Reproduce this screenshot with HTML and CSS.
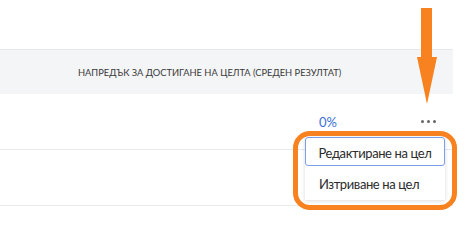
FILE: index.html
```html
<!DOCTYPE html>
<html lang="bg">
<head>
<meta charset="utf-8">
<link rel="stylesheet" href="styles.css">
</head>
<body>
<div class="page">
  <div class="table">
    <div class="thead">
      <div class="th">НАПРЕДЪК ЗА ДОСТИГАНЕ НА ЦЕЛТА (СРЕДЕН РЕЗУЛТАТ)</div>
    </div>
    <div class="row">
      <span class="pct">0%</span>
      <span class="more"><i></i><i></i><i></i></span>
    </div>
    <div class="row"></div>
  </div>

  <div class="menu">
    <div class="item active">Редактиране на цел</div>
    <div class="item second">Изтриване на цел</div>
  </div>

  <div class="ring"></div>
  <svg class="arrow" width="24" height="100" viewBox="0 0 24 100">
    <rect x="4" y="0" width="11" height="50" fill="#f7821f"/>
    <polygon points="0,49 20,49 10,96" fill="#f7821f"/>
  </svg>
</div>
</body>
</html>
```
FILE: styles.css
```css
html, body {
  margin: 0;
  padding: 0;
  background: #ffffff;
}
.page {
  position: relative;
  width: 474px;
  height: 242px;
  overflow: hidden;
  font-family: "Lato", "Noto Sans", sans-serif;
  color: #333;
}
.table {
  width: 453px;
  padding-top: 49px;
}
.thead {
  height: 44px;
  background: #f4f5f7;
  border-top: 1px solid #e7e8eb;
  display: flex;
  align-items: center;
}
.th {
  padding-left: 78px;
  font-size: 9.3px;
  color: #3a3a3a;
  white-space: nowrap;
}
.row {
  height: 55px;
  border-bottom: 1px solid #e8e9ec;
  display: flex;
  align-items: center;
  justify-content: flex-end;
  padding-right: 17px;
}
.pct {
  color: #3b6fd6;
  font-size: 13px;
  margin-right: 84px;
}
.more {
  display: flex;
  gap: 3px;
}
.more i {
  width: 3px;
  height: 3px;
  border-radius: 50%;
  background: #666;
}
.menu {
  position: absolute;
  left: 305px;
  top: 137px;
  width: 140px;
  background: #fff;
  box-shadow: 0 1px 4px rgba(0,0,0,0.15);
  font-family: "Lato", "Noto Sans", sans-serif;
  font-size: 13px;
  letter-spacing: -0.4px;
  color: #2b2b2b;
  white-space: nowrap;
}
.item {
  box-sizing: border-box;
  padding-left: 14px;
}
.item.active {
  height: 29px;
  line-height: 26px;
  padding-top: 2px;
  padding-left: 12.5px;
  border: 1.5px solid #7c9ee8;
  border-radius: 3px;
}
.item.second {
  height: 34px;
  line-height: 20px;
  padding-top: 8px;
}
.ring {
  position: absolute;
  left: 293px;
  top: 131px;
  width: 154px;
  height: 69px;
  border: 5px solid #f7821f;
  border-radius: 17px;
}
.arrow {
  position: absolute;
  left: 417px;
  top: 8px;
}
```
